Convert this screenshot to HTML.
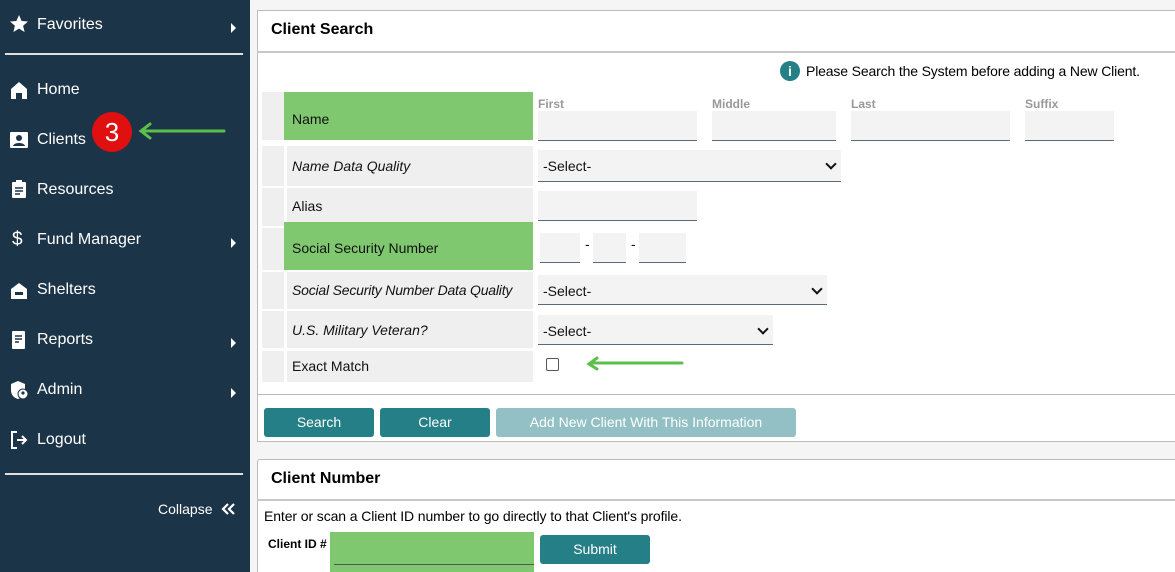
<!DOCTYPE html>
<html><head><style>
*{box-sizing:border-box;margin:0;padding:0}
html,body{width:1175px;height:572px;overflow:hidden}
body{background:#f5f5f5;font-family:"Liberation Sans",sans-serif;position:relative}
.a{position:absolute}
#sb{left:0;top:0;width:250px;height:572px;background:#1c3447;color:#fff}
.ni{position:absolute;left:37px;font-size:16px;color:#fff}
.ic{position:absolute;left:9px;width:20px;height:20px}
.car{position:absolute;left:231px;width:0;height:0;border-left:5px solid #fff;border-top:5px solid transparent;border-bottom:5px solid transparent}
.hr{position:absolute;left:5px;width:238px;height:2px;background:#e0e0e0}
.panel{background:#fff;border:1px solid #bbb;border-right:none}
.g{background:#efefef}
.gr{background:#80c870}
.lbl{position:absolute;font-size:14px;color:#111}
.inp{position:absolute;background:#f3f3f3;border-bottom:1px solid #5a6a7a}
.sel{position:absolute;background:#f3f3f3;border-bottom:1px solid #5a6a7a;font-size:14px;padding:8px 0 0 5px;color:#111}
.sel:after{content:"";position:absolute;right:6px;top:10px;width:6px;height:6px;border-right:2px solid #111;border-bottom:2px solid #111;transform:rotate(45deg)}
.sm{position:absolute;font-size:12px;color:#999;font-weight:bold}
.btn{position:absolute;background:#247f86;color:#fff;font-size:14px;text-align:center;border-radius:3px;line-height:29px}
</style></head><body>
<div id="sb" class="a">
<svg class="ic" style="top:14px" viewBox="0 0 20 20"><path d="M10 1l2.6 6 6.4.5-4.9 4.2 1.5 6.3L10 14.6 4.4 18l1.5-6.3L1 7.5l6.4-.5z" fill="#fff"/></svg>
<div class="ni" style="top:16px">Favorites</div><div class="car" style="top:23px"></div>
<div class="hr" style="top:53px"></div>
<svg class="ic" style="top:80px" viewBox="0 0 20 20"><path d="M2 9L10 2l8 7v10h-5v-6H7v6H2z" fill="#fff"/></svg>
<div class="ni" style="top:81px">Home</div>
<svg class="ic" style="top:130px" viewBox="0 0 20 20"><rect x="1" y="2" width="18" height="16" rx="1" fill="#fff"/><circle cx="10" cy="8" r="3" fill="#1c3447"/><path d="M4 16c1-4 11-4 12 0z" fill="#1c3447"/></svg>
<div class="ni" style="top:131px">Clients</div>
<div class="a" style="left:92px;top:112px;width:40px;height:40px;border-radius:50%;background:#e01010;color:#fff;font-size:26px;text-align:center;line-height:40px">3</div>
<svg class="a" style="left:136px;top:122px" width="92" height="18"><path d="M88 9H6M14 2L5 9l9 7" stroke="#5cbf4a" stroke-width="3" fill="none" stroke-linecap="round"/></svg>
<svg class="ic" style="top:179px" viewBox="0 0 20 20"><rect x="3" y="3" width="14" height="16" rx="1" fill="#fff"/><rect x="7" y="1" width="6" height="4" fill="#fff"/><path d="M6 9h8M6 12h8M6 15h5" stroke="#1c3447" stroke-width="1.6"/></svg>
<div class="ni" style="top:181px">Resources</div>
<div class="ni" style="top:229px;left:12px;font-size:19px">$</div>
<div class="ni" style="top:231px">Fund Manager</div><div class="car" style="top:238px"></div>
<svg class="ic" style="top:280px" viewBox="0 0 20 20"><path d="M2 9L10 3l8 6v10H2z" fill="#fff"/><rect x="6" y="12" width="8" height="3" fill="#1c3447"/></svg>
<div class="ni" style="top:281px">Shelters</div>
<svg class="ic" style="top:330px" viewBox="0 0 20 20"><rect x="3" y="1" width="13" height="18" rx="1" fill="#fff"/><path d="M6 6h7M6 9h7M6 12h4" stroke="#1c3447" stroke-width="1.6"/></svg>
<div class="ni" style="top:331px">Reports</div><div class="car" style="top:338px"></div>
<svg class="ic" style="top:380px" viewBox="0 0 20 20"><path d="M9 1l7 3v6c0 5-3 8-7 9-4-1-7-4-7-9V4z" fill="#fff"/><circle cx="14" cy="14" r="5" fill="#fff" stroke="#1c3447" stroke-width="1"/><circle cx="14" cy="13" r="1.6" fill="#1c3447"/></svg>
<div class="ni" style="top:381px">Admin</div><div class="car" style="top:388px"></div>
<svg class="ic" style="top:430px" viewBox="0 0 20 20"><path d="M8 2H3v16h5" stroke="#fff" stroke-width="2" fill="none"/><path d="M8 10h9M13 6l4 4-4 4" stroke="#fff" stroke-width="2" fill="none"/></svg>
<div class="ni" style="top:431px">Logout</div>
<div class="hr" style="top:473px"></div>
<div class="ni" style="top:501px;left:158px;font-size:14px">Collapse</div>
<svg class="a" style="left:221px;top:502px" width="14" height="14"><path d="M7 2L2 7l5 5M13 2L8 7l5 5" stroke="#fff" stroke-width="2.2" fill="none"/></svg>
</div>

<div class="a panel" style="left:257px;top:10px;width:918px;height:432px"></div>
<div class="a" style="left:257px;top:51px;width:918px;height:2px;background:#c8c8c8"></div>
<div class="a" style="left:271px;top:21px;font-size:16px;font-weight:bold">Client Search</div>
<div class="a" style="left:780px;top:61px;width:20px;height:20px;border-radius:50%;background:#247f86;color:#fff;font-weight:bold;font-size:14px;text-align:center;line-height:20px">i</div>
<div class="a" style="left:806px;top:63px;font-size:14px;letter-spacing:-0.15px">Please Search the System before adding a New Client.</div>

<div class="a g" style="left:262px;top:92px;width:22px;height:48px"></div>
<div class="a gr" style="left:284px;top:92px;width:249px;height:48px"></div>
<div class="lbl" style="left:292px;top:111px">Name</div>
<div class="sm" style="left:538px;top:97px">First</div><div class="sm" style="left:712px;top:97px">Middle</div><div class="sm" style="left:851px;top:97px">Last</div><div class="sm" style="left:1025px;top:97px">Suffix</div>
<div class="inp" style="left:538px;top:111px;width:159px;height:30px"></div>
<div class="inp" style="left:712px;top:111px;width:124px;height:30px"></div>
<div class="inp" style="left:851px;top:111px;width:159px;height:30px"></div>
<div class="inp" style="left:1025px;top:111px;width:89px;height:30px"></div>

<div class="a g" style="left:262px;top:146px;width:22px;height:40px"></div>
<div class="a g" style="left:287px;top:146px;width:246px;height:40px"></div>
<div class="lbl" style="left:292px;top:158px;font-style:italic">Name Data Quality</div>
<div class="sel" style="left:538px;top:150px;width:303px;height:32px">-Select-</div>

<div class="a g" style="left:262px;top:188px;width:22px;height:38px"></div>
<div class="a g" style="left:287px;top:188px;width:246px;height:38px"></div>
<div class="lbl" style="left:292px;top:198px">Alias</div>
<div class="inp" style="left:538px;top:191px;width:159px;height:30px"></div>

<div class="a g" style="left:262px;top:228px;width:22px;height:42px"></div>
<div class="a gr" style="left:284px;top:222px;width:249px;height:48px"></div>
<div class="lbl" style="left:292px;top:240px">Social Security Number</div>
<div class="inp" style="left:540px;top:233px;width:40px;height:30px"></div>
<div class="lbl" style="left:585px;top:236px">-</div>
<div class="inp" style="left:593px;top:233px;width:33px;height:30px"></div>
<div class="lbl" style="left:631px;top:236px">-</div>
<div class="inp" style="left:639px;top:233px;width:47px;height:30px"></div>

<div class="a g" style="left:262px;top:272px;width:22px;height:37px"></div>
<div class="a g" style="left:287px;top:272px;width:246px;height:37px"></div>
<div class="lbl" style="left:292px;top:282px;font-style:italic;letter-spacing:-0.2px">Social Security Number Data Quality</div>
<div class="sel" style="left:538px;top:275px;width:289px;height:30px">-Select-</div>

<div class="a g" style="left:262px;top:311px;width:22px;height:37px"></div>
<div class="a g" style="left:287px;top:311px;width:246px;height:37px"></div>
<div class="lbl" style="left:292px;top:322px;font-style:italic">U.S. Military Veteran?</div>
<div class="sel" style="left:538px;top:315px;width:235px;height:30px">-Select-</div>

<div class="a g" style="left:262px;top:351px;width:22px;height:31px"></div>
<div class="a g" style="left:287px;top:351px;width:246px;height:31px"></div>
<div class="lbl" style="left:292px;top:358px">Exact Match</div>
<div class="a" style="left:546px;top:358px;width:13px;height:13px;border:1px solid #555;border-radius:2px;background:#fff"></div>
<svg class="a" style="left:584px;top:356px" width="102" height="18"><path d="M98 7H6M13 2L5 8l8 5" stroke="#5cbf4a" stroke-width="3" fill="none" stroke-linecap="round"/></svg>

<div class="a" style="left:258px;top:394px;width:917px;height:1px;background:#bbb"></div>
<div class="btn" style="left:264px;top:408px;width:110px">Search</div>
<div class="btn" style="left:380px;top:408px;width:110px">Clear</div>
<div class="btn" style="left:496px;top:408px;width:300px;background:#92c0c4">Add New Client With This Information</div>

<div class="a panel" style="left:257px;top:459px;width:918px;height:120px;border-radius:3px 0 0 0"></div>
<div class="a" style="left:257px;top:499px;width:918px;height:2px;background:#c8c8c8"></div>
<div class="a" style="left:271px;top:470px;font-size:16px;font-weight:bold">Client Number</div>
<div class="a" style="left:264px;top:508px;font-size:14px;letter-spacing:-0.1px">Enter or scan a Client ID number to go directly to that Client's profile.</div>
<div class="a" style="left:268px;top:537px;font-size:12px;font-weight:bold">Client ID #</div>
<div class="a gr" style="left:330px;top:532px;width:204px;height:40px"></div>
<div class="a" style="left:334px;top:564px;width:200px;height:1px;background:#555"></div>
<div class="btn" style="left:540px;top:535px;width:110px">Submit</div>
</body></html>
